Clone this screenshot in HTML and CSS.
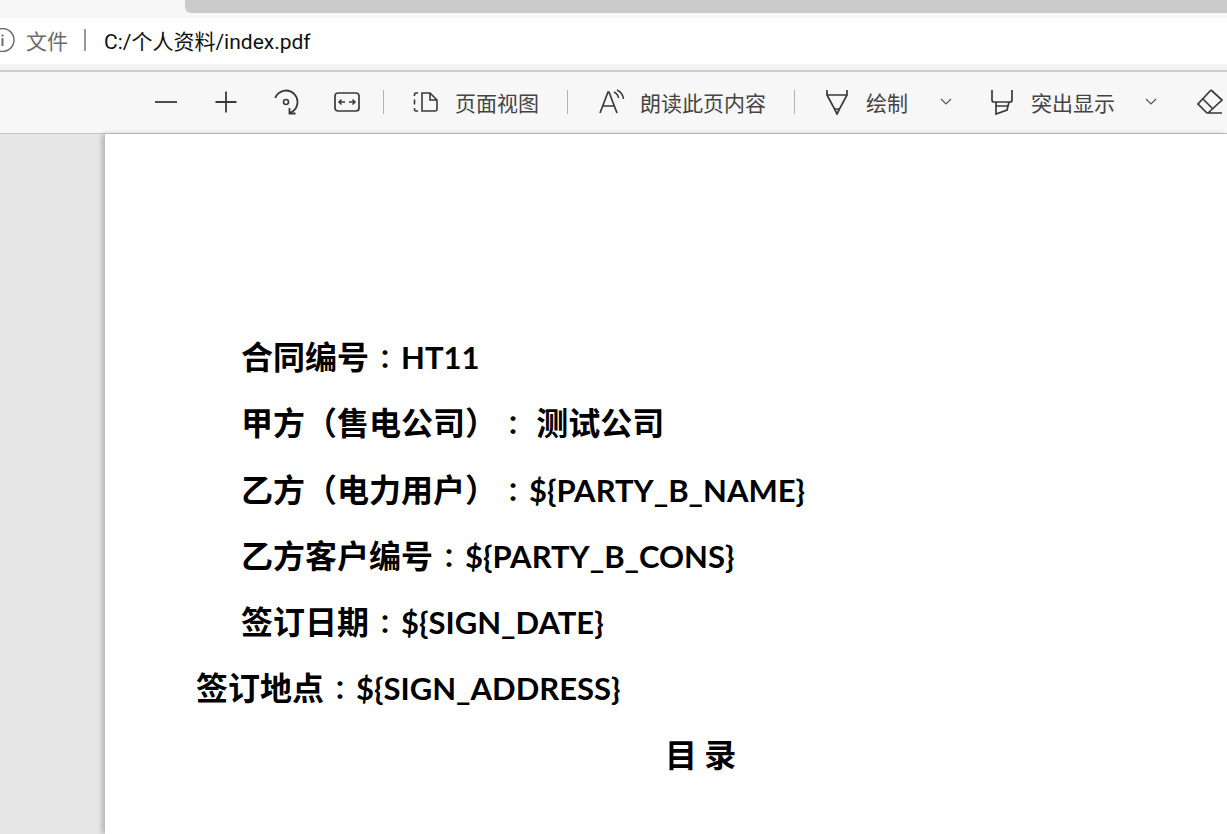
FILE: index.html
```html
<!DOCTYPE html>
<html>
<head>
  <title>index.pdf</title>
  <link rel="stylesheet" href="styles.css">
</head>
<body>
  <div class="tabstrip"><div class="tab"></div></div>
  <div class="addressbar">
    <svg class="info" width="15" height="24" viewBox="0 0 15 24"><circle cx="2.500" cy="12" r="11.500" fill="none" stroke="#6e6e6e" stroke-width="1.500"/><rect x="1.500" y="10" width="2" height="8" fill="#6e6e6e"/><rect x="1.500" y="6.500" width="2" height="2" fill="#6e6e6e"/></svg>
    <span class="scheme">文件</span>
    <span class="bar-sep"></span>
    <span class="url">C:/个人资料/index.pdf</span>
  </div>
  <div class="toolbar">
    <svg class="tool zoom-out" width="24" height="24" viewBox="0 0 24 24"><path d="M1 12h22" stroke="#3a3a3a" stroke-width="1.800" fill="none"/></svg>
    <svg class="tool zoom-in" width="24" height="24" viewBox="0 0 24 24"><path d="M1.500 12h21M12 1.500v21" stroke="#3a3a3a" stroke-width="1.800" fill="none"/></svg>
    <svg class="tool rotate" width="26" height="26" viewBox="0 0 26 26"><path d="M2.200 9A11.500 11.500 0 1 1 17 23.800" stroke="#3a3a3a" stroke-width="1.800" fill="none"/><path d="M16.500 19v5.500h6" stroke="#3a3a3a" stroke-width="1.800" fill="none"/><circle cx="13" cy="13" r="2.500" stroke="#3a3a3a" stroke-width="1.600" fill="none"/></svg>
    <svg class="tool fit" width="26" height="22" viewBox="0 0 26 22"><rect x="1" y="2" width="24" height="18" rx="3" stroke="#3a3a3a" stroke-width="1.700" fill="none"/><path d="M5 11h6M15 11h6M7.500 8.500 5 11l2.500 2.500M18.500 8.500 21 11l-2.500 2.500" stroke="#3a3a3a" stroke-width="1.500" fill="none"/></svg>
    <span class="sep sep-a"></span>
    <svg class="tool view" width="26" height="24" viewBox="0 0 26 24"><path d="M5 3H3Q1.500 3 1.500 4.500V6M1.500 9.500v5M1.500 18v1.500Q1.500 21 3 21h2" stroke="#3a3a3a" stroke-width="1.600" fill="none"/><path d="M9 3h8l7 7v9q0 2-2 2H9zM17 3v7h7" stroke="#3a3a3a" stroke-width="1.600" fill="none"/></svg>
    <span class="label label-view">页面视图</span>
    <span class="sep sep-b"></span>
    <svg class="tool read" width="26" height="26" viewBox="0 0 26 26"><path d="M1 24 9 3h1l8 21M4 17h11" stroke="#3a3a3a" stroke-width="1.700" fill="none"/><path d="M15 3q4 2 4.500 6M18 1q6 3 6.500 9" stroke="#3a3a3a" stroke-width="1.500" fill="none"/></svg>
    <span class="label label-read">朗读此页内容</span>
    <span class="sep sep-c"></span>
    <svg class="tool draw" width="24" height="26" viewBox="0 0 24 26"><path d="M2 1v5h20V1M2 6l7.500 14h5L22 6M9.500 20l2.500 5 2.500-5" stroke="#3a3a3a" stroke-width="1.700" fill="none"/></svg>
    <span class="label label-draw">绘制</span>
    <svg class="chevron chev-draw" width="12" height="8" viewBox="0 0 12 8"><path d="m1 1 5 5 5-5" stroke="#555" stroke-width="1.200" fill="none"/></svg>
    <svg class="tool mark" width="24" height="26" viewBox="0 0 24 26"><path d="M2 1v10q0 2 2 2h16q2 0 2-2V1M6 13v12l11-4 2-8M6 17h12" stroke="#3a3a3a" stroke-width="1.700" fill="none"/></svg>
    <span class="label label-mark">突出显示</span>
    <svg class="chevron chev-mark" width="12" height="8" viewBox="0 0 12 8"><path d="m1 1 5 5 5-5" stroke="#555" stroke-width="1.200" fill="none"/></svg>
    <svg class="tool erase" width="26" height="26" viewBox="0 0 26 26"><path d="M14 1 1 15l9 9h15M14 1l11 10-14 13M6 10l10 10" stroke="#3a3a3a" stroke-width="1.700" fill="none"/></svg>
  </div>
  <div class="viewer">
    <div class="sidebar"></div>
    <div class="page">
      <p class="line indent">合同编号<span class="colon">：</span><span class="code">HT11</span></p>
      <p class="line indent">甲方（售电公司）<span class="colon">：</span> 测试公司</p>
      <p class="line indent">乙方（电力用户）<span class="colon">：</span><span class="code">${PARTY_B_NAME}</span></p>
      <p class="line indent">乙方客户编号<span class="colon">：</span><span class="code">${PARTY_B_CONS}</span></p>
      <p class="line indent">签订日期<span class="colon">：</span><span class="code">${SIGN_DATE}</span></p>
      <p class="line">签订地点<span class="colon">：</span><span class="code">${SIGN_ADDRESS}</span></p>
      <p class="line heading">目 录</p>
    </div>
  </div>
</body>
</html>
```

FILE: styles.css
```css
html, body {
  margin: 0;
  height: 834px;
  overflow: hidden;
}

body {
  font-family: "Noto Sans CJK SC", sans-serif;
  background: #fff;
  display: flex;
  flex-direction: column;
}

.tabstrip {
  height: 18px;
  background: #f7f7f7;
  padding-left: 185px;
  box-sizing: border-box;
  flex: none;
}

.tab {
  height: 13px;
  background: #cbcbcb;
  border-bottom-left-radius: 6px;
}

.addressbar {
  height: 46px;
  padding-bottom: 2px;
  box-sizing: border-box;
  background: #fff;
  display: flex;
  align-items: center;
  flex: none;
}

.info {
  margin-right: 11px;
}

.scheme {
  font-size: 21px;
  color: #6b6b6b;
  width: 42px;
}

.bar-sep {
  width: 2px;
  height: 22px;
  background: #999;
  margin: 0 18px 0 16px;
}

.url {
  font-family: Roboto, "Noto Sans CJK SC", sans-serif;
  font-size: 21px;
  color: #111;
}

.toolbar {
  height: 63px;
  background: #f7f7f7;
  border-top: 6px solid #f3f3f3;
  box-shadow: inset 0 2px 0 #cdcdcd;
  border-bottom: 1px solid #c6c6c6;
  display: flex;
  align-items: center;
  padding-left: 154px;
  flex: none;
  white-space: nowrap;
}

.tool,
.chevron,
.label,
.sep {
  flex: none;
}

.sep {
  width: 1px;
  height: 24px;
  background: #b2b2b2;
}

.label {
  font-size: 21px;
  color: #444;
}

.zoom-in { margin-left: 36px; }
.rotate { margin-left: 35px; }
.fit { margin-left: 35px; }
.sep-a { margin-left: 23px; }
.view { margin-left: 29px; }
.label-view { margin-left: 16px; }
.sep-b { margin-left: 28px; }
.read { margin-left: 31px; }
.label-read { margin-left: 15px; }
.sep-c { margin-left: 28px; }
.draw { margin-left: 30px; }
.label-draw { margin-left: 17px; }
.chev-draw { margin-left: 32px; }
.mark { margin-left: 38px; }
.label-mark { margin-left: 17px; }
.chev-mark { margin-left: 30px; }
.erase { margin-left: 40px; }

.viewer {
  flex: 1;
  display: flex;
  background: #e6e6e6;
}

.sidebar {
  width: 105px;
  flex: none;
}

.page {
  flex: 1;
  background: #fff;
  box-shadow: -3px 0 5px rgba(0, 0, 0, 0.22);
  padding-top: 188px;
  padding-left: 91px;
}

.line {
  margin: 0;
  height: 66.300px;
  line-height: 66px;
  font-family: "Noto Sans CJK SC", sans-serif;
  font-size: 32px;
  font-weight: 700;
  color: #000;
  white-space: nowrap;
  text-spacing-trim: space-all;
}

.colon {
  font-family: "Noto Sans CJK TC", sans-serif;
  font-size: 26px;
  padding: 0 3px;
}

.code {
  font-family: Lato, sans-serif;
  font-size: 31px;
}

.indent {
  padding-left: 45px;
}

.heading {
  padding-left: 469px;
}
```
